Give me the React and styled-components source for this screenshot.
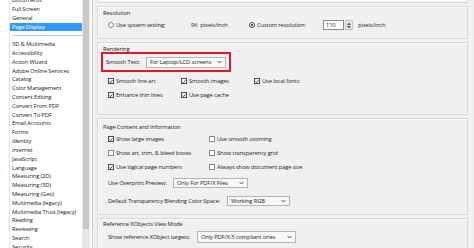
import React from 'react';
import styled, { createGlobalStyle } from 'styled-components';

const Global = createGlobalStyle`
  html, body { margin: 0; padding: 0; background: #f0f0f0; }
`;

const Root = styled.div`
  width: 474px;
  height: 248px;
  overflow: hidden;
  display: flex;
  font-family: "Open Sans", "Noto Sans", sans-serif;
  font-size: 5.8px;
  letter-spacing: -0.15px;
  color: #1e1e1e;
  background: #f0f0f0;
`;

const Sidebar = styled.div`
  width: 93px;
  flex: none;
  display: flex;
  background: #fff;
  border-right: 1px solid #d2d2d2;
  box-sizing: border-box;
  padding-left: 9px;
  padding-right: 2px;
`;

const List = styled.div`
  flex: 1;
  overflow: hidden;
  border-left: 1px solid #e4e4e4;
`;

const ListInner = styled.div`
  margin-top: -3.9px;
`;

const Item = styled.div`
  height: 8.82px;
  line-height: 8.82px;
  padding-left: 2px;
  white-space: nowrap;
  background: ${p => (p.$active ? '#3399ff' : 'transparent')};
  color: ${p => (p.$active ? '#fff' : '#1e1e1e')};
`;

const Sep = styled.div`
  height: 8.82px;
  display: flex;
  align-items: center;
  &::after {
    content: '';
    flex: 1;
    height: 1px;
    background: #a9cdef;
    margin-left: 2px;
  }
`;

const Scrollbar = styled.div`
  width: 8px;
  background: #e8e8e8;
  padding: 0 1px;
  box-sizing: border-box;
`;

const Thumb = styled.div`
  height: 229px;
  background: #c9c9c9;
`;

const Panel = styled.div`
  flex: 1;
  padding: 0 6px 0 4px;
  display: flex;
  flex-direction: column;
  gap: 3px;
`;

const Section = styled.div`
  border: 1px solid #d8d8d8;
  box-shadow: inset 1px 1px 0 #fbfbfb;
  height: ${p => p.$h}px;
  box-sizing: border-box;
  padding: ${p => p.$top || 2}px 0 0 5px;
  flex: none;
`;

const CutSection = styled(Section)`
  border-top: none;
`;

const Title = styled.div`
  height: 9px;
  line-height: 9px;
`;

const Row = styled.div`
  display: flex;
  align-items: center;
  height: ${p => p.$h || 14}px;
  padding-left: 5px;
  white-space: nowrap;
`;

const Cell = styled.div`
  display: flex;
  align-items: center;
  width: ${p => (p.$w ? p.$w + 'px' : 'auto')};
  flex: none;
`;

const Label = styled.span`
  margin-left: ${p => p.$ml || 0}px;
`;

const Box = styled.span`
  width: 6px;
  height: 6px;
  box-sizing: border-box;
  border: 1px solid ${p => (p.$on ? '#4a4a4a' : '#8a8a8a')};
  background: #fff;
  display: inline-flex;
  align-items: center;
  justify-content: center;
  margin-right: 2px;
  flex: none;
`;

const Radio = styled(Box)`
  border-radius: 50%;
  &::after {
    content: '';
    width: 2.5px;
    height: 2.5px;
    border-radius: 50%;
    background: ${p => (p.$on ? '#222' : 'transparent')};
  }
`;

const Select = styled.div`
  width: ${p => p.$w}px;
  height: ${p => p.$h || 10}px;
  box-sizing: border-box;
  border: 1px solid #b4b4b4;
  background: #f8f8f8;
  display: flex;
  align-items: center;
  justify-content: space-between;
  padding: 0 3px 0 3px;
  margin-left: ${p => p.$ml || 0}px;
  flex: none;
`;

const Input = styled.div`
  width: 21px;
  height: 10px;
  box-sizing: border-box;
  border: 1px solid #8c8c8c;
  background: #fff;
  padding-left: 2px;
  line-height: 8px;
`;

const Spin = styled.div`
  width: 8px;
  height: 10px;
  margin-left: 1px;
  box-sizing: border-box;
  border: 1px solid #c4c4c4;
  background: #e9e9e9;
  display: flex;
  flex-direction: column;
  align-items: center;
  justify-content: space-around;
`;

const Highlight = styled.div`
  display: flex;
  align-items: center;
  width: 130px;
  height: 20px;
  box-sizing: border-box;
  border: 2.5px solid #e0192b;
  margin: -2px 0 2px -2px;
  padding-left: 3px;
  white-space: nowrap;
`;

const Check = ({ on }) => (
  <Box $on={on}>
    {on && (
      <svg width="5" height="5" viewBox="0 0 5 5">
        <path d="M0.6 2.6 L1.9 3.9 L4.4 0.9" fill="none" stroke="#222" strokeWidth="1" />
      </svg>
    )}
  </Box>
);

const Chevron = () => (
  <svg width="5" height="4" viewBox="0 0 5 4">
    <path d="M0.5 1 L2.5 3 L4.5 1" fill="none" stroke="#444" strokeWidth="0.9" />
  </svg>
);

const Arrow = ({ up }) => (
  <svg width="4" height="3" viewBox="0 0 4 3">
    <path d={up ? 'M0 3 L2 0.5 L4 3 Z' : 'M0 0 L2 2.5 L4 0 Z'} fill="#555" />
  </svg>
);

const items = [
  'Documents', 'Full Screen', 'General', 'Page Display', null,
  '3D & Multimedia', 'Accessibility', 'Action Wizard', 'Adobe Online Services',
  'Catalog', 'Color Management', 'Content Editing', 'Convert From PDF',
  'Convert To PDF', 'Email Accounts', 'Forms', 'Identity', 'Internet',
  'JavaScript', 'Language', 'Measuring (2D)', 'Measuring (3D)', 'Measuring (Geo)',
  'Multimedia (legacy)', 'Multimedia Trust (legacy)', 'Reading', 'Reviewing',
  'Search', 'Security',
];

const Option = ({ on, children, w }) => (
  <Cell $w={w}>
    <Check on={on} />
    <span>{children}</span>
  </Cell>
);

export default function App() {
  return (
    <Root>
      <Global />
      <Sidebar>
        <List>
          <ListInner>
            {items.map((t, i) =>
              t ? (
                <Item key={i} $active={t === 'Page Display'}>{t}</Item>
              ) : (
                <Sep key={i} />
              )
            )}
          </ListInner>
        </List>
        <Scrollbar>
          <Thumb />
        </Scrollbar>
      </Sidebar>

      <Panel>
        <CutSection $h={3} />

        <Section $h={33} $top={2}>
          <Title>Resolution</Title>
          <Row $h={14}>
            <Cell $w={83}>
              <Radio />
              <span>Use system setting:</span>
            </Cell>
            <Cell $w={58}>
              <span>96</span>
              <Label $ml={3}>pixels/inch</Label>
            </Cell>
            <Cell $w={74}>
              <Radio $on />
              <span>Custom resolution:</span>
            </Cell>
            <Input>110</Input>
            <Spin>
              <Arrow up />
              <Arrow />
            </Spin>
            <Label $ml={5}>pixels/inch</Label>
          </Row>
        </Section>

        <Section $h={73} $top={2}>
          <Title>Rendering</Title>
          <Highlight>
            <span>Smooth Text:</span>
            <Select $w={80} $h={11} $ml={6}>
              <span>For Laptop/LCD screens</span>
              <Chevron />
            </Select>
          </Highlight>
          <Row $h={14}>
            <Option on w={73}>Smooth line art</Option>
            <Option on w={73}>Smooth images</Option>
            <Option on>Use local fonts</Option>
          </Row>
          <Row $h={14}>
            <Option on w={73}>Enhance thin lines</Option>
            <Option on>Use page cache</Option>
          </Row>
        </Section>

        <Section $h={97} $top={4}>
          <Title>Page Content and Information</Title>
          <Row $h={14}>
            <Option on w={101}>Show large images</Option>
            <Option>Use smooth zooming</Option>
          </Row>
          <Row $h={14}>
            <Option w={101}>Show art, trim, &amp; bleed boxes</Option>
            <Option>Show transparency grid</Option>
          </Row>
          <Row $h={14}>
            <Option on w={101}>Use logical page numbers</Option>
            <Option>Always show document page size</Option>
          </Row>
          <Row $h={18}>
            <Cell $w={65}>Use Overprint Preview:</Cell>
            <Select $w={75}>
              <span>Only For PDF/X Files</span>
              <Chevron />
            </Select>
          </Row>
          <Row $h={18}>
            <Cell $w={119}>Default Transparency Blending Color Space:</Cell>
            <Select $w={63}>
              <span>Working RGB</span>
              <Chevron />
            </Select>
          </Row>
        </Section>

        <Section $h={40} $top={1}>
          <Title>Reference XObjects View Mode</Title>
          <Row $h={16}>
            <Cell $w={89}>Show reference XObject targets:</Cell>
            <Select $w={99} $h={12}>
              <span>Only PDF/X-5 compliant ones</span>
              <Chevron />
            </Select>
          </Row>
        </Section>
      </Panel>
    </Root>
  );
}
